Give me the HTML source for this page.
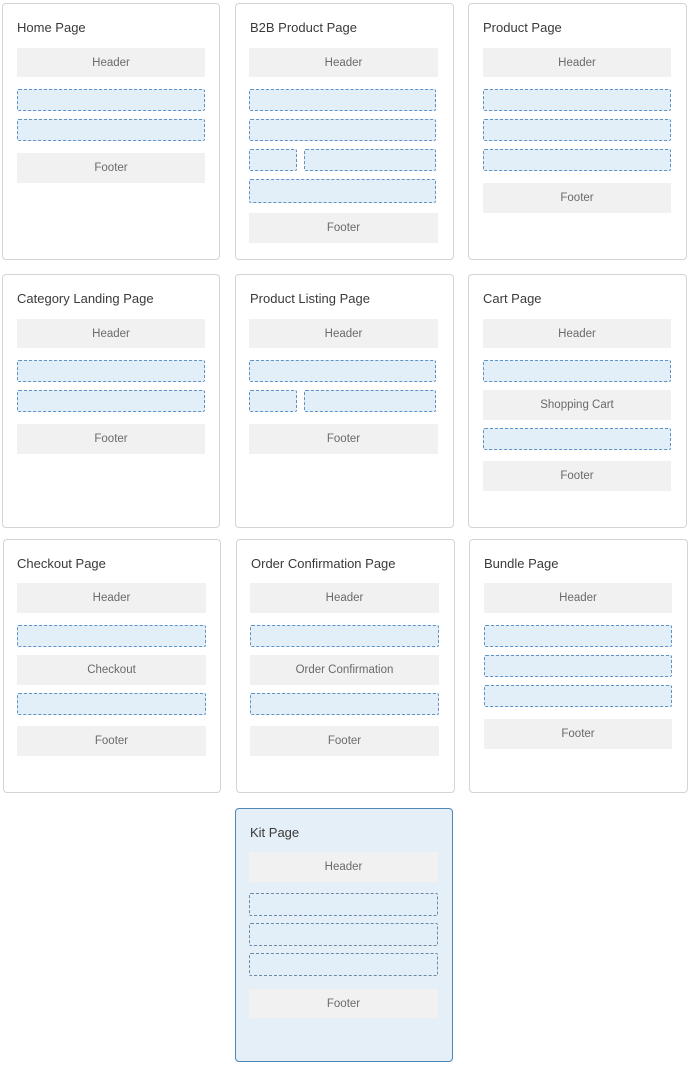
<!DOCTYPE html><html><head><meta charset="utf-8"><style>
body{margin:0;width:696px;height:1080px;background:#fff;position:relative;font-family:"Liberation Sans",sans-serif;overflow:hidden}
.c{position:absolute;border:1px solid #d4d4d4;border-radius:4px;box-sizing:border-box;background:#fff}
.k{background:#e4eff7;border-color:#4f86b8}
.t{position:absolute;font-size:13px;color:#3a3a3a}
.g{position:absolute;background:#f1f1f1;color:#6a6a6a;font-size:11.5px;display:flex;align-items:center;justify-content:center}
.d{position:absolute;background:#e3eff8;border:1px dashed #5f93c3;box-sizing:border-box;border-radius:2px}
.kd{border-color:#6a8aa8}
</style></head><body>
<div class="c" style="left:2px;top:3px;width:218px;height:257px"></div>
<div class="c" style="left:235px;top:3px;width:219px;height:257px"></div>
<div class="c" style="left:468px;top:3px;width:219px;height:257px"></div>
<div class="c" style="left:2px;top:274px;width:218px;height:254px"></div>
<div class="c" style="left:235px;top:274px;width:219px;height:254px"></div>
<div class="c" style="left:468px;top:274px;width:219px;height:254px"></div>
<div class="c" style="left:3px;top:539px;width:218px;height:254px"></div>
<div class="c" style="left:236px;top:539px;width:219px;height:254px"></div>
<div class="c" style="left:469px;top:539px;width:219px;height:254px"></div>
<div class="c k" style="left:235px;top:808px;width:218px;height:254px"></div>

<div class="t" style="left:17px;top:20px">Home Page</div>
<div class="g" style="left:17px;top:48px;width:188px;height:29px">Header</div>
<div class="d" style="left:17px;top:89px;width:188px;height:22px"></div>
<div class="d" style="left:17px;top:119px;width:188px;height:22px"></div>
<div class="g" style="left:17px;top:153px;width:188px;height:30px">Footer</div>

<div class="t" style="left:250px;top:20px">B2B Product Page</div>
<div class="g" style="left:249px;top:48px;width:189px;height:29px">Header</div>
<div class="d" style="left:249px;top:89px;width:187px;height:22px"></div>
<div class="d" style="left:249px;top:119px;width:187px;height:22px"></div>
<div class="d" style="left:249px;top:149px;width:48px;height:22px"></div>
<div class="d" style="left:304px;top:149px;width:132px;height:22px"></div>
<div class="d" style="left:249px;top:179px;width:187px;height:24px"></div>
<div class="g" style="left:249px;top:213px;width:189px;height:30px">Footer</div>

<div class="t" style="left:483px;top:20px">Product Page</div>
<div class="g" style="left:483px;top:48px;width:188px;height:29px">Header</div>
<div class="d" style="left:483px;top:89px;width:188px;height:22px"></div>
<div class="d" style="left:483px;top:119px;width:188px;height:22px"></div>
<div class="d" style="left:483px;top:149px;width:188px;height:22px"></div>
<div class="g" style="left:483px;top:183px;width:188px;height:30px">Footer</div>

<div class="t" style="left:17px;top:291px">Category Landing Page</div>
<div class="g" style="left:17px;top:319px;width:188px;height:29px">Header</div>
<div class="d" style="left:17px;top:360px;width:188px;height:22px"></div>
<div class="d" style="left:17px;top:390px;width:188px;height:22px"></div>
<div class="g" style="left:17px;top:424px;width:188px;height:30px">Footer</div>

<div class="t" style="left:250px;top:291px">Product Listing Page</div>
<div class="g" style="left:249px;top:319px;width:189px;height:29px">Header</div>
<div class="d" style="left:249px;top:360px;width:187px;height:22px"></div>
<div class="d" style="left:249px;top:390px;width:48px;height:22px"></div>
<div class="d" style="left:304px;top:390px;width:132px;height:22px"></div>
<div class="g" style="left:249px;top:424px;width:189px;height:30px">Footer</div>

<div class="t" style="left:483px;top:291px">Cart Page</div>
<div class="g" style="left:483px;top:319px;width:188px;height:29px">Header</div>
<div class="d" style="left:483px;top:360px;width:188px;height:22px"></div>
<div class="g" style="left:483px;top:390px;width:188px;height:30px">Shopping Cart</div>
<div class="d" style="left:483px;top:428px;width:188px;height:22px"></div>
<div class="g" style="left:483px;top:461px;width:188px;height:30px">Footer</div>

<div class="t" style="left:17px;top:556px">Checkout Page</div>
<div class="g" style="left:17px;top:583px;width:189px;height:30px">Header</div>
<div class="d" style="left:17px;top:625px;width:189px;height:22px"></div>
<div class="g" style="left:17px;top:655px;width:189px;height:30px">Checkout</div>
<div class="d" style="left:17px;top:693px;width:189px;height:22px"></div>
<div class="g" style="left:17px;top:726px;width:189px;height:30px">Footer</div>

<div class="t" style="left:251px;top:556px">Order Confirmation Page</div>
<div class="g" style="left:250px;top:583px;width:189px;height:30px">Header</div>
<div class="d" style="left:250px;top:625px;width:189px;height:22px"></div>
<div class="g" style="left:250px;top:655px;width:189px;height:30px">Order Confirmation</div>
<div class="d" style="left:250px;top:693px;width:189px;height:22px"></div>
<div class="g" style="left:250px;top:726px;width:189px;height:30px">Footer</div>

<div class="t" style="left:484px;top:556px">Bundle Page</div>
<div class="g" style="left:484px;top:583px;width:188px;height:30px">Header</div>
<div class="d" style="left:484px;top:625px;width:188px;height:22px"></div>
<div class="d" style="left:484px;top:655px;width:188px;height:22px"></div>
<div class="d" style="left:484px;top:685px;width:188px;height:22px"></div>
<div class="g" style="left:484px;top:719px;width:188px;height:30px">Footer</div>

<div class="t" style="left:250px;top:825px">Kit Page</div>
<div class="g" style="left:249px;top:852px;width:189px;height:30px">Header</div>
<div class="d kd" style="left:249px;top:893px;width:189px;height:23px"></div>
<div class="d kd" style="left:249px;top:923px;width:189px;height:23px"></div>
<div class="d kd" style="left:249px;top:953px;width:189px;height:23px"></div>
<div class="g" style="left:249px;top:989px;width:189px;height:29px">Footer</div>
</body></html>
